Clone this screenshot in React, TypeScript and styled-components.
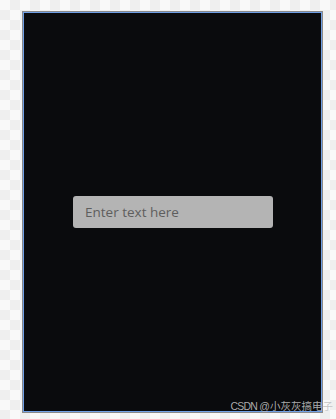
import React from 'react'
import styled, { createGlobalStyle } from 'styled-components'

const GlobalStyle = createGlobalStyle`
  html, body {
    margin: 0;
    padding: 0;
  }
  body {
    width: 336px;
    height: 419px;
    overflow: hidden;
    background-color: #f9f9f9;
    background-image:
      linear-gradient(45deg, #efefef 25%, transparent 25%, transparent 75%, #efefef 75%),
      linear-gradient(45deg, #efefef 25%, transparent 25%, transparent 75%, #efefef 75%);
    background-size: 20px 20px;
    background-position: 0 0, 10px 10px;
  }
`

const Page = styled.div`
  position: relative;
  width: 336px;
  height: 419px;
  padding: 11px 0 0 22px;
  box-sizing: border-box;
`

const Frame = styled.div`
  width: 301px;
  height: 402px;
  box-sizing: border-box;
  border: 1px solid #8a8a8a;
  background: #6f9fe6;
  padding: 1px;
`

const Screen = styled.div`
  width: 100%;
  height: 100%;
  background: #0a0b0d;
  display: flex;
  flex-direction: column;
  align-items: flex-start;
  padding: 183px 0 0 49px;
  box-sizing: border-box;
`

const TextField = styled.input`
  width: 200px;
  height: 32px;
  box-sizing: border-box;
  border: none;
  outline: none;
  border-radius: 3px;
  background: #b4b4b4;
  padding: 0 12px;
  font-family: 'Open Sans', 'Noto Sans', sans-serif;
  font-size: 13.5px;
  color: #555;

  &::placeholder {
    color: #5e5e5e;
  }
`

const Watermark = styled.span`
  position: absolute;
  right: 3px;
  bottom: 6px;
  font-family: 'Liberation Sans', 'Noto Sans CJK SC', sans-serif;
  font-size: 10.5px;
  color: rgba(190, 190, 190, 0.9);
  white-space: nowrap;
`

const Brand = styled.span`
  letter-spacing: -0.8px;
  margin-right: 1px;
`

export default function App() {
  return (
    <>
      <GlobalStyle />
      <Page>
        <Frame>
          <Screen>
            <TextField placeholder="Enter text here" />
          </Screen>
        </Frame>
        <Watermark>
          <Brand>CSDN @</Brand>小灰灰搞电子
        </Watermark>
      </Page>
    </>
  )
}
